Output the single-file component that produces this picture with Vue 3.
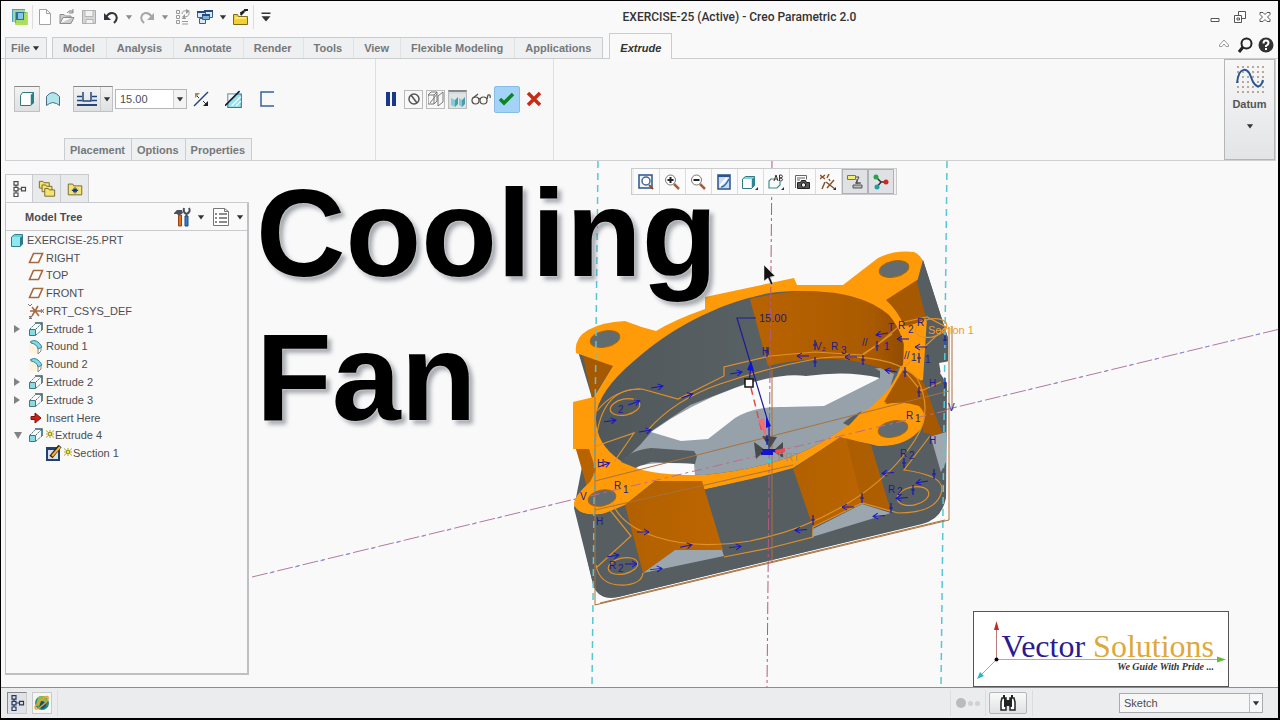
<script setup>
import { ref } from 'vue'

const depth = ref('15.00')
const filter = ref('Sketch')

const quick = [
  { icon: 'logo', label: 'Creo' },
  { sep: true },
  { icon: 'new', label: 'New' },
  { icon: 'open', label: 'Open' },
  { icon: 'save', label: 'Save' },
  { icon: 'undo', label: 'Undo' },
  { icon: 'down-grey', label: 'Undo list', slim: true },
  { icon: 'redo', label: 'Redo' },
  { icon: 'down-grey', label: 'Redo list', slim: true },
  { icon: 'regen', label: 'Regenerate' },
  { icon: 'windows', label: 'Windows' },
  { icon: 'down', label: 'Window list', slim: true },
  { icon: 'close-folder', label: 'Close' },
  { sep: true },
  { icon: 'customize', label: 'Customize', slim: true }
]
const tabs = ['Model', 'Analysis', 'Annotate', 'Render', 'Tools', 'View', 'Flexible Modeling', 'Applications']
const panels = ['Placement', 'Options', 'Properties']
const tree = [
  { name: 'EXERCISE-25.PRT', icon: 'part', level: 0 },
  { name: 'RIGHT', icon: 'plane', level: 1 },
  { name: 'TOP', icon: 'plane', level: 1 },
  { name: 'FRONT', icon: 'plane', level: 1 },
  { name: 'PRT_CSYS_DEF', icon: 'csys', level: 1 },
  { name: 'Extrude 1', icon: 'extrude', level: 1, fold: 'right' },
  { name: 'Round 1', icon: 'round', level: 1 },
  { name: 'Round 2', icon: 'round', level: 1 },
  { name: 'Extrude 2', icon: 'extrude', level: 1, fold: 'right' },
  { name: 'Extrude 3', icon: 'extrude', level: 1, fold: 'right' },
  { name: 'Insert Here', icon: 'insert', level: 1 },
  { name: 'Extrude 4', icon: 'extrude', level: 1, fold: 'open', star: true },
  { name: 'Section 1', icon: 'section', level: 2, star: true }
]
const viewTools = [
  { icon: 'refit', label: 'Refit' },
  { icon: 'zoom-in', label: 'Zoom in' },
  { icon: 'zoom-out', label: 'Zoom out' },
  { icon: 'repaint', label: 'Repaint' },
  { icon: 'shade', label: 'Display style' },
  { icon: 'saved', label: 'Saved orientations' },
  { icon: 'camera', label: 'View manager' },
  { icon: 'datums', label: 'Datum display' },
  { icon: 'annot', label: 'Annotation display', on: true },
  { icon: 'spin', label: 'Spin center', on: true }
]
// Sketch constraint marks: position and heading of each arrow
const arrows = [
  [657, 387, -10], [687, 396, -20], [736, 373, -10], [610, 421, -8], [634, 403, -20], [604, 465, -20], [645, 431, -10],
  [643, 532, 0], [686, 546, -12], [735, 547, -6], [656, 569, -6], [613, 556, -8], [631, 564, 0],
  [803, 356, 180], [851, 357, 180], [882, 334, 170], [903, 339, 180], [921, 347, 180], [891, 371, 190], [888, 473, 175],
  [848, 507, 180], [879, 516, 175], [801, 530, 175], [922, 482, 170], [902, 498, 175]
]
const ticks = [
  [767, 352], [815, 362], [863, 360], [862, 498], [813, 520], [891, 508], [904, 463], [934, 474], [913, 490],
  [905, 372], [919, 392], [945, 383], [945, 340], [767, 440], [815, 345], [877, 346], [919, 358]
]
const labels = [
  ['H', 762, 355], ['V₂', 815, 350], ['R', 831, 350], ['3', 841, 354], ['T', 888, 331], ['R', 898, 329], ['2', 908, 333],
  ['R', 917, 326], ['//', 862, 346], ['1', 884, 350], ['//', 904, 359], ['1', 911, 361], ['1', 925, 363],
  ['H', 929, 387], ['V', 948, 411], ['R', 906, 419], ['1', 915, 422], ['H', 929, 444], ['R', 900, 457], ['2', 909, 459],
  ['R', 888, 493], ['2', 897, 495], ['H', 597, 467], ['V', 580, 500], ['R', 614, 489], ['1', 623, 493],
  ['H', 596, 525], ['R', 609, 569], ['2', 618, 572], ['2', 618, 413]
]
</script>

<template>
  <div class="app">
    <svg class="sprite" aria-hidden="true">
      <defs>
        <symbol id="i-logo" viewBox="0 0 16 16"><path fill="#b6df58" d="M3 3h13v13H3z" /><path fill="#4ba3b9" d="M0 0h13v13H0z" /><path fill="#9fd8a5" d="M1 1h12v12H1z" /><path fill="#4fae9e" d="M3 3h11v11H3z" /><path fill="#a9da62" d="M4 4h10v10H4z" /><path fill="#2d6f9a" d="M4 3h8v8H4z" /><path fill="#7fc9e6" d="M6 4h5v6H6z" /></symbol>
        <symbol id="i-new" viewBox="0 0 16 16"><path fill="#fff" stroke="#a3a3a3" d="M2.500.500h7l4 4v11h-11zM9.500.500v4h4" /></symbol>
        <symbol id="i-open" viewBox="0 0 16 16"><path fill="#ccc" stroke="#8e8e8e" d="M1 14.500v-9h4l1.500 1.500H12v2M1 14.500h11l3-6H4zM8 4q3-4 6-1m0-3v4h-4" /></symbol>
        <symbol id="i-save" viewBox="0 0 16 16"><path fill="#d5d5d5" stroke="#aaa" d="M1.500 1.500h13v13h-13z" /><path fill="#f2f2f2" stroke="#b5b5b5" d="M4 1.500h8v6H4zM5 10.500h7v4H5z" /></symbol>
        <symbol id="i-undo" viewBox="0 0 16 16"><path fill="none" stroke="#30343b" stroke-width="2" d="M3 8q4-6 9-3 4 4-1 9" /><path fill="#30343b" d="M1 4v7h7z" /></symbol>
        <symbol id="i-redo" viewBox="0 0 16 16"><path fill="none" stroke="#a3a6ab" stroke-width="2" d="M13 8q-4-6-9-3-4 4 1 9" /><path fill="#a3a6ab" d="M15 4v7H8z" /></symbol>
        <symbol id="i-down" viewBox="0 0 16 16"><path fill="#333" d="M3 5h10l-5 7z" /></symbol>
        <symbol id="i-down-grey" viewBox="0 0 16 16"><path fill="#8b8b8b" d="M3 5h10l-5 7z" /></symbol>
        <symbol id="i-customize" viewBox="0 0 16 16"><path fill="#333" d="M2 2h12v2H2zM2 7h12l-6 7z" /></symbol>
        <symbol id="i-regen" viewBox="0 0 16 16"><path fill="none" stroke="#999" d="M1.500 1.500h3v3h-3zM1.500 6.500h3v3h-3zM1.500 11.500h3v3h-3zM7 9.500h4M7 12.500h6M7 15h6M7 5q0-4 5-3m2 1q1 4-4 5" /><path fill="#999" d="M11 0l4 2-4 3zM10 5v5L7 8z" /></symbol>
        <symbol id="i-windows" viewBox="0 0 16 16"><g fill="#dbe8f5" stroke="#3c6085"><path d="M7.500 1.500h8v7h-8z" /><path d="M.500 2.500h8v6h-8z" /><path d="M2.500 9.500h6v5h-6z" /><path fill="#7cb4e2" d="M5.500 5.500h7v5h-7z" /></g><path fill="#234c80" d="M7 1h9v2H7zM0 2h8v2H0zM5 5h8v2H5z" /></symbol>
        <symbol id="i-close-folder" viewBox="0 0 16 16"><path fill="#f1cf36" stroke="#806a15" d="M.500 5.500h4l1 2h9v8H.500z" /><path fill="#ffe978" d="M2 8h11v2H2z" /><path fill="none" stroke="#222" stroke-width="1.500" d="M8 6q0-4 5-4.500" /><path fill="#222" d="M7 3h5l-4 4zM11 0h4v2h-4z" /></symbol>

        <symbol id="i-solid" viewBox="0 0 16 16"><path fill="#fff" stroke="#31777d" d="M1.500 4.500l2-3h11v10l-3 3h-10z" /><path fill="#2a7f86" d="M11.500 4l3.500-3v11l-3.500 3z" /><path fill="#fff" d="M2 4h9.500v10H2z" /></symbol>
        <symbol id="i-surface" viewBox="0 0 16 16"><path fill="#b2e6ea" stroke="#456e82" d="M1.500 14.500v-9q6-8 13 0v9l-3-2q-4-2-7 0z" /></symbol>
        <symbol id="i-depth" viewBox="0 0 20 16"><path fill="none" stroke="#23457e" stroke-width="1.500" d="M0 5.500h5m10 0h5M0 9.500h5m10 0h5M6 1v9h8V1" /><path stroke="#23457e" stroke-width="2" d="M0 14h20" /></symbol>
        <symbol id="i-flip" viewBox="0 0 16 16"><path stroke="#23457e" stroke-width="1.500" d="M1 15L15 1" /><path stroke="#333" d="M3 4l3 3M10 10l4 4" /><path fill="#9a9059" d="M2 2h5L2 7z" /><path fill="#222" d="M15 15h-5l5-5z" /></symbol>
        <symbol id="i-remove" viewBox="0 0 16 16"><path fill="#98e0ec" stroke="#43758a" d="M2.500 3.500h12v12h-12z" /><path fill="#f8f8f9" d="M2 3h8L2 11z" /><path fill="none" stroke="#7b99a5" d="M2.500 10V3.500H10" /><path stroke="#fff" d="M6 14l8-8M10 14l4-4" /><path stroke="#10213e" stroke-width="1.500" d="M0 14L13 1" /></symbol>
        <symbol id="i-thicken" viewBox="0 0 16 16"><path fill="none" stroke="#34619a" stroke-width="1.500" d="M15 1H2v14h13" /></symbol>
        <symbol id="i-pause" viewBox="0 0 16 16"><path fill="#17398c" d="M3 1h4v14H3zM9 1h4v14H9z" /></symbol>
        <symbol id="i-none" viewBox="0 0 16 16"><circle cx="8" cy="8" r="5" fill="none" stroke="#555" stroke-width="1.500" /><path stroke="#555" stroke-width="1.500" d="M5 4l6 8" /></symbol>
        <symbol id="i-unattached" viewBox="0 0 16 16"><path fill="none" stroke="#777" d="M0 4l3-3h6L6 4H0v9h6V4m0 9l3-3V1M10 5l5-4v10l-5 4zM2 12L9 3" /></symbol>
        <symbol id="i-attached" viewBox="0 0 16 16"><path fill="#dfe5e6" d="M0 2h16v14H0z" /><path fill="#7fcbd6" d="M1 6l4 2v7l-4-2zM9 6l3 2v7l-3-2z" /><path fill="#4b9ca8" d="M5 8l3-3v7l-3 3zM12 8l3-3v7l-3 3z" /></symbol>
        <symbol id="i-glasses" viewBox="0 0 20 16"><g fill="none" stroke="#504b43" stroke-width="1.200"><circle cx="4.500" cy="9.500" r="3.500" /><circle cx="12.500" cy="9.500" r="3.500" /><path d="M8 8q.500-1 1 0M2 7l5-4M16 8l1-4q3-1 2 3" /></g></symbol>
        <symbol id="i-check" viewBox="0 0 16 16"><path fill="none" stroke="#0c8426" stroke-width="3.500" d="M1 8l4 4 9-9" /></symbol>
        <symbol id="i-cancel" viewBox="0 0 16 16"><path stroke="#c72c14" stroke-width="3.500" d="M2 2l12 12M14 2L2 14" /></symbol>
        <symbol id="i-datum" viewBox="0 0 28 28"><path stroke="#b9a79a" stroke-width="2" stroke-dasharray="2 3" d="M1 2h27M1 7h27M1 12h27M1 17h27M1 22h27M1 27h27" /><path fill="none" stroke="#28568f" stroke-width="2" d="M1 18C3 0 12 3 15 12s9 14 12 3" /></symbol>
        <symbol id="i-min" viewBox="0 0 16 16"><path fill="#fff" stroke="#555" d="M4 9.500h8v3H4z" /></symbol>
        <symbol id="i-restore" viewBox="0 0 16 16"><path fill="#fff" stroke="#555" d="M6.500 2.500h7v7h-7z" /><path fill="#fff" stroke="#555" d="M2.500 6.500h7v7h-7zM5 9h2.500v2H5z" /></symbol>
        <symbol id="i-close" viewBox="0 0 16 16"><path fill="#fff" stroke="#555" d="M3 3.500h3l2 2 2-2h3v2L10.500 8l2.500 2.500v2h-3l-2-2-2 2H3v-2L5.500 8 3 5.500z" /></symbol>
        <symbol id="i-up" viewBox="0 0 16 16"><path fill="#fff" stroke="#999" d="M3.500 8L8 3l4.500 5v1.500H10L8 7 6 9.500H3.500z" /></symbol>
        <symbol id="i-search" viewBox="0 0 16 16"><circle cx="9.500" cy="6.500" r="5" fill="none" stroke="#222" stroke-width="2" /><path stroke="#222" stroke-width="3" d="M6 10l-4 5" /></symbol>
        <symbol id="i-help" viewBox="0 0 16 16"><circle cx="8" cy="8" r="7.500" fill="#333" /><path fill="none" stroke="#fff" stroke-width="2" d="M5.500 6.500q0-3 2.500-3t2.500 2.500Q10.500 7.500 8 9v1" /><path fill="#fff" d="M7 11h2v2H7z" /></symbol>

        <symbol id="i-tree" viewBox="0 0 16 16"><path fill="none" stroke="currentColor" stroke-width="1.200" d="M3 .600h4v3.500H3zM3 6.300h4v3.500H3zM3 12h4v3.500H3zM10.500 6.300h4v3.500h-4zM5 4v2.300M5 10v2M7 8h3.500" /></symbol>
        <symbol id="i-folders" viewBox="0 0 20 20"><g fill="#f4e36f" stroke="#6e6230"><path d="M1.500 8V1.500h4l1 1.500h6v6h-11z" /><path d="M4.500 12V5.500h4l1 1.500h6v6h-11z" /><path d="M7.500 18V9.500h4l1 1.500h6v7z" /></g></symbol>
        <symbol id="i-favorite" viewBox="0 0 20 20"><path fill="#f4e36f" stroke="#6e6230" d="M2.500 16.500v-12h5l1 2h9v10z" /><path stroke="#173a7d" stroke-width="1.200" d="M10 8v7M6.500 11.500h7M8 9.500l4 4M12 9.500l-4 4" /></symbol>
        <symbol id="i-tools" viewBox="0 0 18 20"><path fill="#49525c" d="M1 6l3-3h5l1 3-3 2H5L4 7H1z" /><path fill="#d97628" stroke="#9a4210" d="M5.500 8h3v11h-3z" /><path fill="#3b7cc0" stroke="#1d4a80" d="M12 9h3v10h-3z" /><path fill="none" stroke="#49525c" stroke-width="2" d="M11 1q-1 5 2.500 6Q18 5 16 1M13.500 6v3" /></symbol>
        <symbol id="i-settings" viewBox="0 0 16 20"><path fill="#fff" stroke="#777" d="M.500 1.500h11l4 3v14H.500zM11.500 1.500v3h4" /><path stroke="#666" stroke-width="1.500" stroke-dasharray="2 2 8" d="M2 7h12M2 11h12M2 15h12" /></symbol>
        <symbol id="i-part" viewBox="0 0 16 16"><path fill="#64d3dc" stroke="#357f8a" d="M2.500 5l3-2.500h8v9l-2.500 3h-8.500z" /><path fill="#8ce9f2" d="M3 5h8v9H3z" /><path fill="#347987" d="M11 6l3-3v9l-3 3z" /></symbol>
        <symbol id="i-plane" viewBox="0 0 16 16"><path fill="#fff" stroke="#a5683f" stroke-width="1.600" d="M5.500 3.500h9l-4 9h-9z" /></symbol>
        <symbol id="i-csys" viewBox="0 0 16 16"><path stroke="#a5683f" stroke-width="1.500" d="M2 8h12M4 4l7 9M10 3L4 13" /><path fill="none" stroke="#777" d="M0 1l2 2 2-2M1 13.500h3l-3 2h3M13 6l3 4M16 6l-3 4" /></symbol>
        <symbol id="i-extrude" viewBox="0 0 16 16"><path fill="#89dce3" stroke="#48757c" d="M1.500 8.500h6v6h-6z" /><path fill="none" stroke="#48757c" stroke-dasharray="2 1" d="M2 8l5-5M8 8l5-5M8 14l6-5" /><path fill="none" stroke="#365e67" stroke-width="1.500" d="M7 2h7v7" /></symbol>
        <symbol id="i-round" viewBox="0 0 16 16"><path fill="#fff3dd" d="M1 5h8v10H1z" /><path fill="#7fdce6" stroke="#3c7f91" d="M2.500 3.500Q9 0 14 9l-4 2Q9 6 3 5z" /><path stroke="#8a8a7b" d="M10 11v5l3-3V9" fill="none" /></symbol>
        <symbol id="i-insert" viewBox="0 0 16 16"><path fill="#cf2018" stroke="#7f100b" d="M3 6.500h4V3l6 5-6 5V9.500H3z" /></symbol>
        <symbol id="i-section" viewBox="0 0 16 16"><path fill="#d9dfeb" stroke="#23406e" stroke-width="2" d="M1 3h12v12H1z" /><path fill="#23406e" d="M0 2h14v3H0z" /><path stroke="#3b250c" stroke-width="4" d="M5 12l9-11" /><path stroke="#f0b53b" stroke-width="2" d="M6 11l8-9" /></symbol>
        <symbol id="i-star" viewBox="0 0 8 8"><path stroke="#b3a720" d="M0 .500l8 7M8 .500l-8 7M0 4h8M4 0v8" /><path fill="#eee65a" stroke="#a59a20" d="M2.500 2.500h3v3h-3z" /></symbol>

        <symbol id="i-refit" viewBox="0 0 16 16"><path fill="#eef4fb" stroke="#2d538c" stroke-width="1.500" d="M1 1h13v13H1z" /><circle cx="8" cy="7" r="4" fill="#fff" stroke="#4c6687" stroke-width="1.500" /><path stroke="#a84520" stroke-width="2" d="M11 11l4 4" /></symbol>
        <symbol id="i-zoom-in" viewBox="0 0 16 16"><circle cx="6.500" cy="6" r="5" fill="#fff" stroke="#777" /><path stroke="#222" stroke-width="2" d="M3.500 6h6M6.500 3v6" /><path stroke="#a4603c" stroke-width="2.500" d="M10 10l5 5" /></symbol>
        <symbol id="i-zoom-out" viewBox="0 0 16 16"><circle cx="6.500" cy="6" r="5" fill="#fff" stroke="#777" /><path stroke="#222" stroke-width="2" d="M3.500 6h6" /><path stroke="#a4603c" stroke-width="2.500" d="M10 10l5 5" /></symbol>
        <symbol id="i-repaint" viewBox="0 0 16 16"><path fill="#c8dcf4" stroke="#2d538c" stroke-width="1.500" d="M2 1h12v14H2z" /><path fill="#2d538c" d="M2 1h12v2H2z" /><path stroke="#fff" stroke-width="2" d="M4 12l7-8" /><path stroke="#2c6fb4" stroke-width="1.500" d="M5 13q4 0 8-8" fill="none" /></symbol>
        <symbol id="i-shade" viewBox="0 0 16 16"><path fill="#7fd4dc" stroke="#347780" d="M.500 5l3-2.500h9v9l-3 3H.500z" /><path fill="#fff" d="M1 5h8.500v9H1z" /><path fill="#2b8791" d="M10 5l3-2v8l-3 3z" /><path fill="#333" d="M16 13v3h-3z" /></symbol>
        <symbol id="i-saved" viewBox="0 0 16 16"><path fill="none" stroke="#3a8d93" stroke-width="1.200" d="M6 5H3L1 7v7h8l3-3V8" /><path fill="none" stroke="#333" d="M6 7l2-6 2 6M7 5h2M11.500 1v6h2q2-1 0-3h-2 2q2-2 0-3z" /><path fill="#333" d="M16 13v3h-3z" /></symbol>
        <symbol id="i-camera" viewBox="0 0 16 16"><path fill="none" stroke="#666" d="M1.500 14V1.500h11v4M3 4h8M3 6h3" /><path fill="#555" stroke="#222" d="M3.500 8.500h3l1-2h4l1 2h3v6h-12z" /><circle cx="9.500" cy="11" r="2.200" fill="#eee" stroke="#111" /></symbol>
        <symbol id="i-datums" viewBox="0 0 16 16"><path stroke="#8a5430" stroke-width="1.500" d="M0 1l5 4M5 1L0 5M9 0L7 4M5 8l-3 7M6 8l9 7M14 6L7 14M9 5l1 2" /><path fill="#333" d="M16 13v3h-3z" /></symbol>
        <symbol id="i-annot" viewBox="0 0 16 16"><path fill="#f0ed78" stroke="#807a27" d="M.500 1.500h8v4h-8z" /><path fill="none" stroke="#444" d="M9 3h3l-3 6h5M10 5v5" /><path fill="#bbb" stroke="#555" d="M6 11h9v3H6zM8 9h5" /></symbol>
        <symbol id="i-spin" viewBox="0 0 16 16"><path fill="none" stroke="#333" stroke-width="1.500" d="M3 3l5 5-4 5M8 8h5" /><circle cx="3" cy="3" r="2.500" fill="#28a447" /><circle cx="13" cy="8" r="2.500" fill="#c92b21" /><circle cx="4" cy="13" r="2.500" fill="#1e9fa5" /></symbol>
        <symbol id="i-globe" viewBox="0 0 18 18"><circle cx="9" cy="9" r="7" fill="#228c79" /><path fill="#88bf52" d="M5 3q8-3 9 3l-6 8-5-3z" /><path fill="#194f75" d="M8 7q5 0 5 5l-3 3-4-2z" /><path fill="none" stroke="#ef9d28" stroke-width="1.500" d="M3 15Q0 13 7 7t8-4q1 3-5 8t-7 4" /></symbol>
        <symbol id="i-find" viewBox="0 0 18 16"><path fill="#fff" stroke="#222" stroke-width="1.500" d="M3 3h4v3v9H2V7zM11 3h4l1 4v8h-5z" /><path fill="#222" d="M6 5h6v6H6zM4 0h2v3H4zM12 0h2v3h-2zM5 3h2v9H5zM11 3h2v9h-2z" /></symbol>
      </defs>
    </svg>

    <header class="titlebar">
      <div class="quick">
        <template v-for="(q, n) in quick" :key="n">
          <span v-if="q.sep" class="vsep"></span>
          <button v-else :class="['tool', { slim: q.slim }]" :aria-label="q.label"><svg><use :href="'#i-' + q.icon" /></svg></button>
        </template>
      </div>
      <div class="title">EXERCISE-25 (Active) - Creo Parametric 2.0</div>
      <div class="win">
        <button aria-label="Minimize"><svg><use href="#i-min" /></svg></button>
        <button aria-label="Restore"><svg><use href="#i-restore" /></svg></button>
        <button aria-label="Close window"><svg><use href="#i-close" /></svg></button>
      </div>
    </header>

    <nav class="tabs">
      <button class="file">File <svg class="tri"><use href="#i-down" /></svg></button>
      <div class="tabset"><button v-for="t in tabs" :key="t">{{ t }}</button></div>
      <button class="active">Extrude</button>
      <div class="help">
        <button aria-label="Collapse ribbon"><svg><use href="#i-up" /></svg></button>
        <button aria-label="Search"><svg><use href="#i-search" /></svg></button>
        <button aria-label="Help"><svg><use href="#i-help" /></svg></button>
      </div>
    </nav>

    <section class="ribbon">
      <div class="group shape">
        <div class="controls">
          <button class="boxed" aria-label="Solid"><svg><use href="#i-solid" /></svg></button>
          <button class="plain" aria-label="Surface"><svg><use href="#i-surface" /></svg></button>
          <div class="boxed split">
            <button aria-label="Depth type"><svg class="wide"><use href="#i-depth" /></svg></button>
            <button class="drop" aria-label="Depth options"><svg class="tri"><use href="#i-down" /></svg></button>
          </div>
          <div class="combo">
            <input v-model="depth" aria-label="Depth value" />
            <button aria-label="Recent values"><svg class="tri"><use href="#i-down" /></svg></button>
          </div>
          <div class="options">
            <button aria-label="Flip direction"><svg><use href="#i-flip" /></svg></button>
            <button aria-label="Remove material"><svg class="big"><use href="#i-remove" /></svg></button>
            <button aria-label="Thicken sketch"><svg><use href="#i-thicken" /></svg></button>
          </div>
        </div>
        <div class="panels"><button v-for="p in panels" :key="p">{{ p }}</button></div>
      </div>
      <div class="group confirm">
        <div class="controls">
          <button class="small" aria-label="Pause"><svg><use href="#i-pause" /></svg></button>
          <span class="previews">
            <button class="small framed" aria-label="No preview"><svg><use href="#i-none" /></svg></button>
            <button class="small framed" aria-label="Unattached preview"><svg><use href="#i-unattached" /></svg></button>
            <button class="small framed pressed" aria-label="Attached preview"><svg><use href="#i-attached" /></svg></button>
          </span>
          <button class="small" aria-label="Verify"><svg class="wide"><use href="#i-glasses" /></svg></button>
          <button class="ok" aria-label="Accept"><svg><use href="#i-check" /></svg></button>
          <button class="small" aria-label="Cancel"><svg><use href="#i-cancel" /></svg></button>
        </div>
      </div>
      <button class="datum"><svg class="wave"><use href="#i-datum" /></svg>Datum<svg class="tri"><use href="#i-down" /></svg></button>
    </section>

    <main class="work">
      <aside class="side">
        <div class="sidetabs">
          <button class="current" aria-label="Model tree"><svg><use href="#i-tree" /></svg></button>
          <button aria-label="Folder browser"><svg class="f"><use href="#i-folders" /></svg></button>
          <button aria-label="Favorites"><svg class="f"><use href="#i-favorite" /></svg></button>
        </div>
        <div class="panel">
          <div class="panelhead">
            <h2>Model Tree</h2>
            <button aria-label="Settings"><svg class="f"><use href="#i-tools" /></svg><svg class="tri"><use href="#i-down" /></svg></button>
            <button aria-label="Show"><svg class="f"><use href="#i-settings" /></svg><svg class="tri"><use href="#i-down" /></svg></button>
          </div>
          <ul class="tree">
            <li v-for="n in tree" :key="n.name" :class="'l' + n.level">
              <span :class="['fold', n.fold]"></span>
              <svg><use :href="'#i-' + n.icon" /></svg>
              <svg v-if="n.star" class="star"><use href="#i-star" /></svg>
              <span>{{ n.name }}</span>
            </li>
          </ul>
        </div>
      </aside>

      <section class="canvas">
        <svg class="scene" viewBox="249 161 1029 526" preserveAspectRatio="xMidYMid slice">
          <defs>
            <linearGradient id="wall" x1="0" x2="1"><stop offset="0" stop-color="#50585b" /><stop offset="1" stop-color="#5f686b" /></linearGradient>
            <linearGradient id="brown" x1="0" x2="1"><stop offset="0" stop-color="#b96300" /><stop offset=".8" stop-color="#a95a00" /><stop offset="1" stop-color="#914c00" /></linearGradient>
            <linearGradient id="front" x1="0" x2="1"><stop offset="0" stop-color="#b26000" /><stop offset="1" stop-color="#bc6600" /></linearGradient>
            <g id="arr" fill="none" stroke="#1414c8"><path d="M-6 0H6M1-3l5 3-5 3" /></g>
          </defs>
          <g fill="none">
            <path stroke="#b27aa0" stroke-dasharray="16 3 4 3" d="M252 577L1280 329" />
            <path stroke="#8c8ce0" stroke-dasharray="4 22" d="M270 573L1280 329" />
          </g>

          <!-- housing sides and base -->
          <path fill="#565e61" d="M574 508L593 584Q598 601 618 597L922 524Q942 519 946 498L947 384L940 373 948 361V338L923 260 886 300 595 400Z" />
          <path fill="#565e61" d="M577 348L592 398 640 400 640 345Z" />
          <path fill="#a65900" d="M583 356L615 363 592 398Z" />
          <path fill="#b96300" d="M575 446L592 447 606 463 587 487Z" />
          <path fill="#9ea8b0" d="M925 438L946 432 946 462 940 474Z" />
          <path fill="#fafafa" d="M939 363L950 361V371L941 374Z" />

          <!-- top faces -->
          <path fill="#ff9b08" d="M576 353Q574 338 588 330T625 321Q640 327 656 331 674 320 705 309V297L794 278 797 285 843 285 878 258Q894 250 914 252 926 258 923 270L917 281 927 318 923 380 904 385 870 420 840 438 793 468 760 477 702 490 655 481 625 505 603 514Q581 518 574 505 573 497 590 482L596 470 589 449 573 449V402L594 397 613 366Z" />
          <path fill="#a65900" d="M886 300L917 280 927 318Q913 326 904 326 898 311 886 300Z" />
          <path fill="#565e61" d="M923 260L948 338V361L937 362 924 310 917 282Z" />
          <path fill="#a65900" d="M904 368L924 383 942 433 925 438 918 411 884 402Z" />

          <!-- bore -->
          <path fill="url(#wall)" d="M596 417Q597 392 635 360C673 327 718 303 770 293C842 284 893 307 904 344Q904 366 892 384 859 423 809 449 766 469 704 475 651 476 621 461 595 444 596 417Z" />
          <path fill="url(#brown)" d="M750 299C811 284 862 292 889 315 902 331 905 343 903 365L888 375Q840 351 768 366Z" />
          <path fill="#565e61" d="M768 366Q842 350 886 371L880 382 769 388Z" />
          <path fill="#97a1a9" d="M622 462L640 445 653 430 690 405 750 382 880 368 894 374 890 388Q859 423 809 449 766 469 704 475 651 475 622 462Z" />
          <path fill="#565e61" d="M768 366Q842 350 880 371L880 379 769 388Z" />
          <path fill="#fafafa" d="M651 432Q690 404 735 388T806 376Q848 370 880 378L824 406 784 407Q755 406 735 418L708 439 681 441Z" />
          <path fill="#565e61" d="M621 462Q630 450 651 448L694 451 697 456 695 464 651 462 636 468Z" />
          <path fill="#fafafa" d="M636 468Q645 461 694 464L695 475Q656 475 636 468Z" />
          <path fill="#565e61" d="M843 423Q850 417 862 411L849 426Z" />

          <!-- ears -->
          <path fill="#ff9b08" d="M835 438Q849 426 862 412 894 397 919 406 930 417 919 431 904 447 878 446L870 444 840 438Z" />
          <g fill="#626b70" stroke="#ab6500">
            <ellipse cx="605" cy="339" rx="15" ry="8" transform="rotate(-12 605 339)" />
            <ellipse cx="894" cy="269" rx="15" ry="8" transform="rotate(-12 894 269)" />
            <ellipse cx="602" cy="498" rx="14" ry="8" transform="rotate(-12 602 498)" />
            <ellipse cx="893" cy="429" rx="15" ry="8" transform="rotate(-12 893 429)" />
          </g>

          <!-- front facets -->
          <path fill="#565e61" d="M576 511Q602 520 625 505L643 573 723 550 703 490 793 470 814 530 890 512 871 446Q902 449 920 432L930 434 946 490Q942 519 920 524L618 597Q598 601 593 584Z" />
          <path fill="url(#front)" d="M625 505L655 481H702L723 550H675L643 573Z" />
          <path fill="url(#front)" d="M793 469L840 437 871 445 891 512 862 503 813 527Z" />
          <path fill="#9c5400" d="M846 438L871 445 891 512 862 503Z" opacity=".4" />
          <path fill="#9ca6af" d="M643 573L675 550H722L724 556ZM813 529L862 504 891 513 812 537Z" />

          <path fill="none" stroke="#55c8d8" stroke-dasharray="7 5" stroke-width="1.500" d="M598 161L592 687M947 161L941 687" />

          <!-- sketch entities -->
          <g fill="none" stroke="#df912a" stroke-width="1.200">
            <path d="M597 411Q614 389 642 389L678 399 724 376V367L770 356 815 352 863 355 892 334" />
            <path d="M648 430Q674 400 720 384T820 358Q891 352 917 378 934 411 915 440C884 488 822 527 750 541 675 553 623 532 612 502" />
            <path d="M596 440Q602 388 640 389M596 446L634 433 614 462M596 565Q600 587 626 585 642 583 643 573M596 568L631 536 610 510M863 354L877 345 904 322 927 317 946 327 920 351 903 369 921 391 941 382" />
            <path d="M724 557L770 548 813 537V527L862 503 898 513Q939 513 942 489 942 475 904 470L930 436" />
            <ellipse cx="625" cy="407" rx="15" ry="8" transform="rotate(-12 625 407)" />
            <ellipse cx="623" cy="566" rx="15" ry="8" transform="rotate(-12 623 566)" />
            <ellipse cx="913" cy="496" rx="16" ry="9" transform="rotate(-12 913 496)" />
            <ellipse cx="931" cy="328" rx="16" ry="9" transform="rotate(-12 931 328)" />
          </g>
          <path fill="none" stroke="#a8723e" d="M595 397V605L949 520V327M595 481L949 391M595 510L793 465M772 370V563M600 603L945 520M952 326V410" />
          <g fill="none">
            <path stroke="#b45a80" stroke-dasharray="12 3 3 3" d="M772 161L767 687" />
            <path stroke="#c06b8c" stroke-dasharray="10 4 3 4" d="M590 496L949 410" />
            <path stroke="#1d1d99" stroke-width="1.200" d="M756 318H737L769 425V455M749 383L751 365" />
            <path stroke="#e04a4a" stroke-width="1.500" stroke-dasharray="7 5" d="M751 388L762 432" />
            <path fill="#f06c78" d="M758 420L764 418 767 440Z" />
            <path fill="#1010dd" d="M747 370L751 361 754 371ZM766 428V416L771 426Z" />
          </g>
          <path fill="#fff" stroke="#111" stroke-width="1.500" d="M745 379h8v8h-8z" />
          <path fill="#484b4d" d="M754 442L765 450 756 459ZM783 442L773 451 783 458ZM762 436L770 448 777 437Z" />
          <path fill="#1414cc" d="M762 449h14v3h-3v3h-12v-3h2z" />
          <path fill="#e94b58" d="M775 450l10-2v4l-9 2z" /><circle cx="769" cy="461" r="2.500" fill="#47c5cf" />
          <use v-for="(a, n) in arrows" :key="'a' + n" href="#arr" :transform="`translate(${a[0]} ${a[1]}) rotate(${a[2]})`" />
          <path v-for="(t, n) in ticks" :key="'t' + n" :d="`M${t[0]} ${t[1] - 5}v10m-2-5h4`" fill="none" stroke="#1818aa" stroke-width="1.200" />
          <g class="marks"><text v-for="(l, n) in labels" :key="'l' + n" :x="l[1]" :y="l[2]">{{ l[0] }}</text></g>
          <text class="dim" x="759" y="322">15.00</text>
          <text class="sec" x="928" y="334">Section 1</text>
          <text class="prt" x="778" y="461">PRT</text>
          <path fill="#111" stroke="#eee" stroke-width=".5" d="M764 265V281L768 278 771 285 773 284 770 277 775 276Z" />
        </svg>

        <h1>Cooling<br />Fan</h1>

        <div class="viewbar" role="toolbar" aria-label="View">
          <button v-for="v in viewTools" :key="v.icon" :class="{ on: v.on }" :aria-label="v.label"><svg><use :href="'#i-' + v.icon" /></svg></button>
        </div>

        <div class="brand">
          <svg viewBox="0 0 254 74"><path stroke="#ba7b7b" d="M22.500 14v34" /><path stroke="#8bcb62" d="M22 47.500h222" /><path stroke="#5dc3d1" d="M22 48L4 66" /><path fill="#c52a1c" d="M20 18l2.500-9 2.500 9z" /><path fill="#66bb35" d="M243 44.500l9 3-9 3z" /><path fill="#2cb5c6" d="M3 67l3-7 4 4z" /><circle cx="22.500" cy="47.500" r="2" /></svg>
          <p class="name"><span>Vector</span> Solutions</p>
          <p class="tag">We Guide With Pride ...</p>
        </div>
      </section>
    </main>

    <footer class="status">
      <button class="sbtn in" aria-label="Toggle tree"><svg><use href="#i-tree" /></svg></button>
      <button class="sbtn" aria-label="Toggle browser"><svg class="globe"><use href="#i-globe" /></svg></button>
      <span class="line"></span>
      <span class="grow"></span>
      <span class="line"></span>
      <span class="dots"><i></i><i></i><i></i></span>
      <span class="line"></span>
      <button class="find" aria-label="Find"><svg><use href="#i-find" /></svg></button>
      <span class="line"></span>
      <div class="filter">
        <select v-model="filter" aria-label="Selection filter"><option>Sketch</option></select>
        <span class="arrow"><svg class="tri"><use href="#i-down" /></svg></span>
      </div>
    </footer>
  </div>
</template>

<style>
body { background: #f9f9fa; }
</style>

<style scoped>
* { box-sizing: border-box; }
.app { min-height: 100vh; display: flex; flex-direction: column; background: #f9f9fa; border: solid #000; border-width: 1px 2px 2px 1px; font: 11px/14px "Liberation Sans", Arial, sans-serif; color: #4c4d50; }
.sprite { position: absolute; width: 0; height: 0; }
button { font: inherit; color: inherit; border: 0; background: none; padding: 0; margin: 0; display: flex; align-items: center; justify-content: center; }
svg { width: 16px; height: 16px; flex: none; display: block; }
.tri { width: 10px; height: 10px; }

.titlebar { height: 32px; display: grid; grid-template-columns: 1fr auto 1fr; align-items: center; }
.quick { display: flex; align-items: center; padding-left: 8px; }
.tool { width: 22px; height: 22px; }
.tool.slim { width: 14px; }
.tool.slim svg { width: 10px; height: 10px; }
.vsep { width: 1px; height: 24px; background: #ddd; margin: 0 1px; }
.vsep + .slim { margin-left: 4px; }
.tool.slim:last-child svg { width: 12px; height: 12px; }
.title { padding-left: 200px; font: 500 12px/16px Roboto, sans-serif; color: #333; }
.win { display: flex; justify-content: flex-end; gap: 9px; padding-right: 5px; }

.tabs { height: 26px; display: flex; align-items: flex-end; font-weight: bold; color: #75787b; padding-left: 4px; border-bottom: 1px solid #cbccce; }
.tabs button { height: 21px; }
.file { width: 42px; border: 1px solid #cbccce; border-bottom: 0; background: #eff0f1; gap: 1px; }
.tabset { display: flex; margin-left: 5px; border: 1px solid #cbccce; border-bottom: 0; background: #eef0f1; }
.tabs .tabset button { height: 20px; padding: 0 11px 0 10px; border-left: 1px solid #e1e2e3; }
.tabs .tabset button:first-child { border-left: 0; }
.tabs .active { height: 26px; margin: 0 0 -1px 6px; padding: 2px 10px 0; border: 1px solid #cbccce; border-bottom: 0; background: #f9f9fa; color: #333; font-style: italic; }
.help { margin-left: auto; display: flex; gap: 5px; padding: 0 4px 3px 0; }
.tabs .help button { height: 20px; }

.ribbon { height: 102px; display: flex; margin: 0 2px 0 4px; border: 1px solid #cfd0d2; border-top: 0; background: #f8f8f9; }
.group { display: flex; flex-direction: column; justify-content: space-between; border-right: 1px solid #dedfe1; padding-top: 27px; }
.shape { width: 370px; }
.confirm { width: 178px; }
.controls { display: flex; align-items: center; height: 26px; }
.shape .controls { padding-left: 8px; }
.boxed { width: 26px; height: 26px; border: 1px solid #c0c1c3; border-top-color: #888; background: linear-gradient(#f3f3f3, #dfe0e1); }
.plain { width: 26px; }
.split { display: flex; width: 40px; margin: 0 2px 0 7px; }
.split button { flex: 1; }
.split .drop { flex: none; width: 12px; border-left: 1px solid #ccc; }
.wide { width: 20px; }
.combo { display: flex; width: 72px; height: 20px; border: 1px solid #b5b6b8; background: #fff; }
.combo input { flex: 1; min-width: 0; border: 0; padding: 0 4px; background: none; font: inherit; color: inherit; outline: none; }
.combo button { width: 13px; border-left: 1px solid #d0d0d0; background: #f3f3f4; }
.options { display: flex; gap: 16px; padding-left: 6px; }
.big { width: 18px; height: 18px; }
.panels { display: flex; padding-left: 58px; font-weight: bold; color: #75787b; }
.panels button { height: 22px; padding: 0 6px 0 5px; border: 1px solid #cbccce; border-bottom: 0; background: #eff0f1; margin-right: -1px; }
.confirm .controls { padding-left: 5px; gap: 4px; }
.previews { display: flex; gap: 3px; }
.small { width: 19px; height: 19px; }
.framed { border: 1px solid #bbb; }
.pressed { border-top: 2px solid #888; background: #d6dcde; }
.ok { width: 26px; height: 27px; background: #a3d3f7; border: 1px solid #85bde8; border-radius: 2px; }
.datum { width: 51px; margin-left: auto; flex-direction: column; justify-content: flex-start; padding-top: 5px; gap: 4px; border: 1px solid #b5b6b8; background: linear-gradient(#f7f7f8, #e3e4e6); font-weight: bold; color: #555; }
.wave { width: 28px; height: 28px; }
.datum .tri { margin-top: 6px; }

.work { flex: 1; display: flex; min-height: 0; }
.side { width: 244px; margin: 13px 0 12px 4px; display: flex; flex-direction: column; }
.sidetabs { display: flex; border-bottom: 1px solid #c9cacd; }
.sidetabs button { width: 28px; height: 28px; border: 1px solid #c9cacd; border-width: 1px 1px 0 0; background: #e9eaec; }
.sidetabs .current { background: #f9f9fa; border-left-width: 1px; margin-bottom: -1px; }
.f { width: 18px; height: 20px; }
.panel { flex: 1; border: 1px solid #bfc0c4; border-width: 0 2px 2px 1px; }
.panelhead { height: 28px; display: flex; align-items: center; gap: 6px; border-bottom: 1px solid #c9cacd; padding: 0 2px 0 19px; }
.panelhead h2 { margin: 0 auto 0 0; font-size: 11px; color: #4b4c50; }
.panelhead button { gap: 5px; }
.tree { list-style: none; margin: 0; padding: 0; height: 231px; display: flex; flex-direction: column; }
.tree li { flex: 1; min-height: 0; display: flex; align-items: center; gap: 2px; padding-left: 3px; }
.tree .l0 .fold { display: none; }
.tree .l1 { padding-left: 8px; }
.tree .l2 { padding-left: 26px; }
.fold { width: 12px; display: flex; }
.fold::before { content: ""; border: solid transparent; border-width: 4px 0 4px 6px; }
.fold.right::before { border-left-color: #808285; }
.fold.open::before { border-width: 7px 4px 0; border-top-color: #808285; }
.tree .star { width: 8px; height: 8px; margin-right: -1px; margin-bottom: 3px; }

.canvas { flex: 1; position: relative; overflow: hidden; min-width: 0; }
.scene { position: absolute; inset: 0; width: 100%; height: 100%; }
.marks { font: 10px "Liberation Sans", sans-serif; fill: #231a90; }
.dim { font: 11px "Liberation Sans", sans-serif; fill: #231a80; }
.sec { font: 11px "Liberation Sans", sans-serif; fill: #ee9c30; }
.prt { font: 11px "Liberation Sans", sans-serif; fill: #a88b70; }
h1 { position: absolute; left: 7px; top: 0; margin: 0; font: bold 124px/144px "Liberation Sans", Arial, sans-serif; color: #000; text-shadow: 0 0 2px #fff, 4px 4px 4px rgba(80, 85, 95, .5); }
.viewbar { position: absolute; top: 7px; left: 50%; transform: translateX(-50%); display: flex; padding: 0 2px; border: 1px solid #cbccce; background: #f0f0f1; }
.viewbar button { width: 26px; height: 25px; border-right: 1px solid #dcdcde; background: #fbfbfb; }
.viewbar .on { background: #dfe1e5; border: 1px solid #aeb1b5; }
.brand { position: absolute; right: 49px; bottom: 0; width: 256px; height: 76px; border: 1px solid #555; background: #fff; }
.brand svg { position: absolute; inset: 0; width: 254px; height: 74px; }
.brand p { position: relative; margin: 0 14px 0 0; text-align: right; font-family: "Liberation Serif", serif; white-space: nowrap; }
.name { padding-top: 18px; font-size: 32px; line-height: 32px; color: #dda93a; }
.name span { color: #2c1a92; }
.brand .tag { font-size: 10px; line-height: 10px; font-weight: bold; font-style: italic; color: #333; }

.status { height: 31px; display: flex; align-items: center; gap: 5px; border-top: 1px solid #8c8d90; background: #ebecee; padding: 0 15px 0 6px; }
.sbtn { width: 20px; height: 22px; border: 1px solid #c9cacc; background: #f5f5f5; color: #23395e; }
.sbtn.in { border-color: #888 #ccc #ccc #888; background: #e0e2e6; }
.globe { width: 18px; height: 18px; }
.line { width: 1px; height: 26px; background: #dcdde0; }
.grow { flex: 1; }
.dots { display: flex; align-items: center; gap: 2px; }
.dots i { width: 5px; height: 5px; border-radius: 50%; background: #cfd1d4; }
.dots i:first-child { width: 10px; height: 10px; background: #b9bbbe; }
.find { width: 38px; height: 22px; border: 1px solid #b5b6b9; border-radius: 2px; background: linear-gradient(#fafafa, #e0e1e3); margin-left: -2px; }
.find svg { width: 18px; }
.filter { position: relative; width: 144px; height: 20px; margin-left: 81px; }
.filter select { width: 100%; height: 100%; appearance: none; border: 1px solid #aaabae; border-radius: 0; background: #f7f7f8; padding: 0 18px 0 4px; font: inherit; color: inherit; }
.arrow { position: absolute; right: 1px; top: 1px; bottom: 1px; width: 13px; border-left: 1px solid #bbb; display: flex; align-items: center; justify-content: center; pointer-events: none; }
</style>
